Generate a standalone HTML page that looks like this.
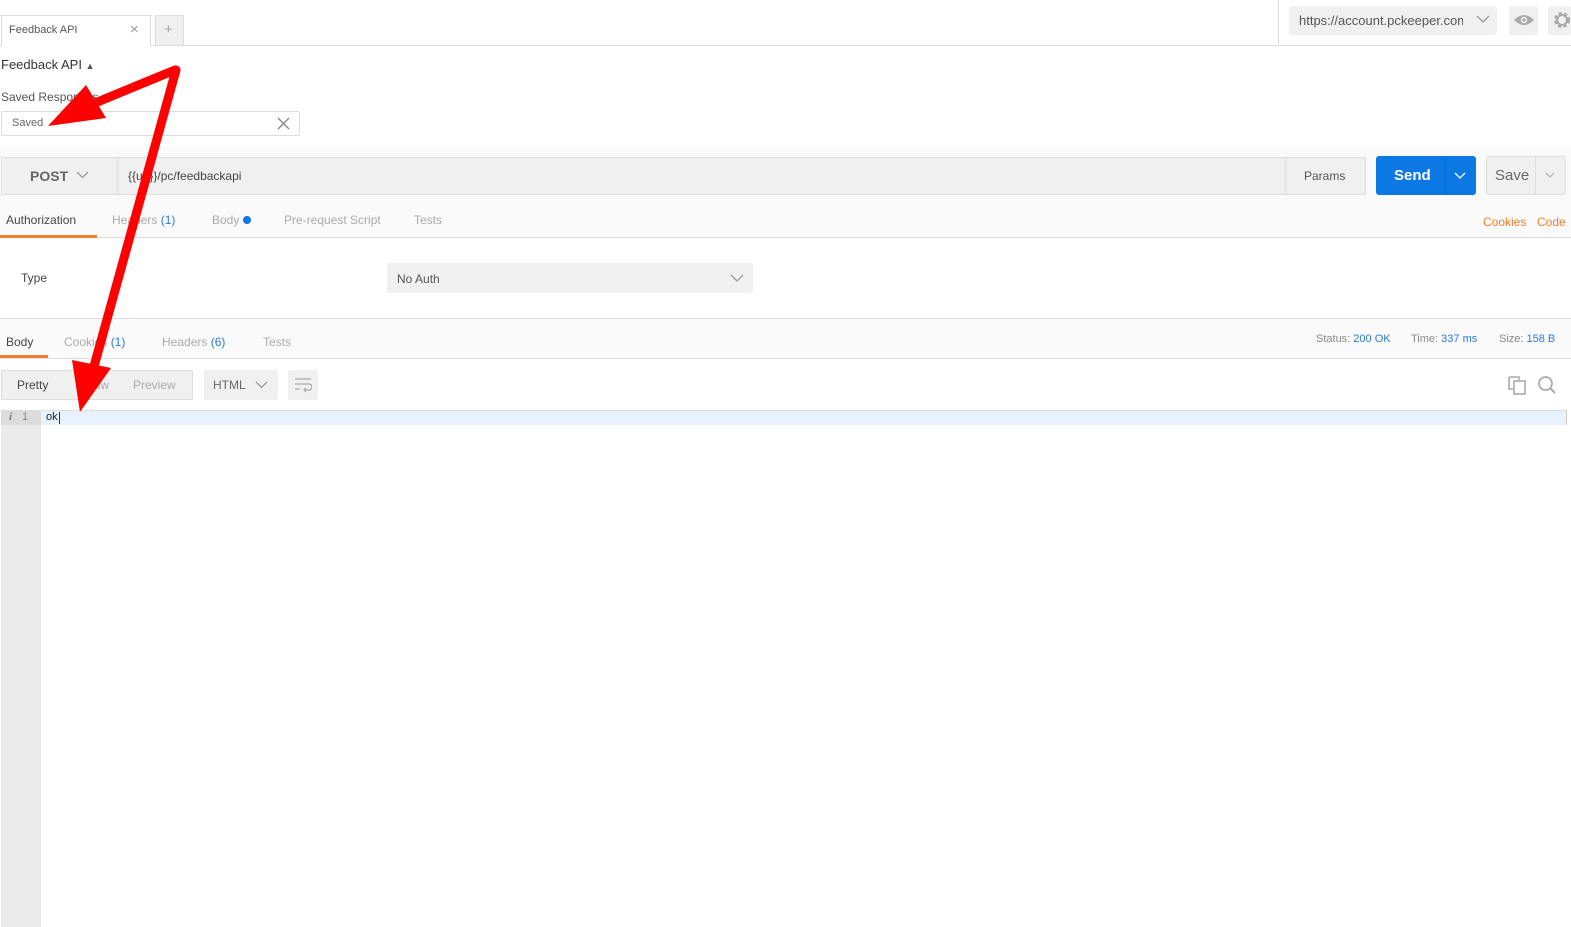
<!DOCTYPE html>
<html><head><meta charset="utf-8"><style>
*{box-sizing:border-box;margin:0;padding:0}
body{width:1571px;height:927px;overflow:hidden;background:#fff;font-family:"Liberation Sans","DejaVu Sans",sans-serif;color:#555;position:relative;font-size:12px}
.a{position:absolute}
.gray{background:#f0f0f0}
.t{position:absolute;white-space:nowrap}
.blue{color:#2b7bd6}
.or{color:#f07e2b}
</style></head><body>
<!-- top bar -->
<div class="a" style="left:0;top:45px;width:1571px;height:1px;background:#ddd"></div>
<div class="a" style="left:1px;top:15px;width:150px;height:31px;background:#fff;border:1px solid #ddd;border-bottom:none"></div>
<div class="t" style="left:9px;top:24px;font-size:11px;color:#555">Feedback API</div>
<div class="t" style="left:130px;top:21px;font-size:15px;color:#999">×</div>
<div class="a gray" style="left:155px;top:15px;width:29px;height:30px;border:1px solid #ddd;border-bottom:none"></div>
<div class="t" style="left:164px;top:21px;font-size:15px;color:#aaa">+</div>
<div class="a" style="left:1278px;top:0;width:1px;height:45px;background:#ddd"></div>
<div class="a gray" style="left:1289px;top:6px;width:208px;height:29px;border-radius:3px"></div>
<div class="t" style="left:1299px;top:13px;font-size:13px;color:#555;width:164px;overflow:hidden">https://account.pckeeper.com</div>
<svg class="a" style="left:1476px;top:14px" width="14" height="10"><path d="M1 2l6 6 6-6" fill="none" stroke="#999" stroke-width="1.3"/></svg>
<div class="a gray" style="left:1509px;top:6px;width:29px;height:29px;border-radius:3px"></div>
<svg class="a" style="left:1513px;top:12px" width="22" height="16"><path d="M1 8Q11-2 21 8Q11 18 1 8Z" fill="#aaa"/><circle cx="11" cy="8" r="3.2" fill="#f0f0f0"/><circle cx="11" cy="8" r="1.6" fill="#aaa"/></svg>
<div class="a gray" style="left:1548px;top:6px;width:23px;height:29px;border-radius:3px"></div>
<svg class="a" style="left:1552px;top:10px" width="19" height="20"><circle cx="10" cy="10" r="6" fill="none" stroke="#aaa" stroke-width="4" stroke-dasharray="3 2"/><circle cx="10" cy="10" r="5" fill="none" stroke="#aaa" stroke-width="2"/></svg>

<div class="t" style="left:1px;top:57px;font-size:13px;color:#333">Feedback API <span style="font-size:9px;color:#555">▲</span></div>
<div class="t" style="left:1px;top:90px;font-size:12px;color:#555">Saved Responses</div>
<div class="a" style="left:1px;top:111px;width:299px;height:25px;border:1px solid #ddd;border-radius:2px"></div>
<div class="t" style="left:12px;top:117px;font-size:11px;color:#666">Saved</div>
<svg class="a" style="left:277px;top:117px" width="13" height="13"><path d="M1 1l11 11M12 1L1 12" stroke="#888" stroke-width="1.4"/></svg>

<!-- request band -->
<div class="a" style="left:0;top:146px;width:1571px;height:92px;background:#fafafa"></div>
<div class="a gray" style="left:1px;top:157px;width:1365px;height:38px;border:1px solid #ddd;border-radius:2px"></div>
<div class="a" style="left:117px;top:158px;width:1px;height:36px;background:#ddd"></div>
<div class="a" style="left:1285px;top:158px;width:1px;height:36px;background:#ddd"></div>
<div class="t" style="left:30px;top:168px;font-size:14px;color:#666;font-weight:bold">POST</div>
<svg class="a" style="left:76px;top:171px" width="13" height="9"><path d="M1 1l5.5 5.5L12 1" fill="none" stroke="#999" stroke-width="1.3"/></svg>
<div class="t" style="left:128px;top:169px;font-size:12px;color:#444">{{url}}/pc/feedbackapi</div>
<div class="t" style="left:1304px;top:169px;font-size:12px;color:#555">Params</div>
<div class="a" style="left:1376px;top:156px;width:100px;height:39px;background:#0b78e3;border-radius:3px"></div>
<div class="a" style="left:1445px;top:156px;width:1px;height:39px;background:#0a66c2"></div>
<div class="t" style="left:1394px;top:167px;font-size:15px;color:#fff;font-weight:bold">Send</div>
<svg class="a" style="left:1454px;top:172px" width="12" height="8"><path d="M1 1l5 5 5-5" fill="none" stroke="#fff" stroke-width="1.3"/></svg>
<div class="a gray" style="left:1486px;top:156px;width:80px;height:39px;border:1px solid #ddd;border-radius:3px"></div>
<div class="a" style="left:1535px;top:157px;width:1px;height:37px;background:#ddd"></div>
<div class="t" style="left:1495px;top:167px;font-size:15px;color:#666">Save</div>
<svg class="a" style="left:1545px;top:172px" width="10" height="7"><path d="M1 1l4 4 4-4" fill="none" stroke="#aaa" stroke-width="1"/></svg>

<div class="t" style="left:6px;top:213px;font-size:12px;color:#444">Authorization</div>
<div class="t" style="left:112px;top:213px;font-size:12px;color:#aaa">Headers <span class="blue">(1)</span></div>
<div class="t" style="left:212px;top:213px;font-size:12px;color:#aaa">Body <span style="display:inline-block;width:8px;height:8px;border-radius:50%;background:#0b78e3"></span></div>
<div class="t" style="left:284px;top:213px;font-size:12px;color:#aaa">Pre-request Script</div>
<div class="t" style="left:414px;top:213px;font-size:12px;color:#aaa">Tests</div>
<div class="t or" style="left:1483px;top:215px;font-size:12px">Cookies</div>
<div class="t or" style="left:1537px;top:215px;font-size:12px">Code</div>
<div class="a" style="left:0;top:237px;width:1571px;height:1px;background:#ddd"></div>
<div class="a" style="left:0;top:235px;width:97px;height:3px;background:#f07e2b"></div>

<div class="t" style="left:21px;top:271px;font-size:12px;color:#444">Type</div>
<div class="a gray" style="left:387px;top:263px;width:366px;height:30px;border-radius:2px"></div>
<div class="t" style="left:397px;top:272px;font-size:12px;color:#555">No Auth</div>
<svg class="a" style="left:730px;top:274px" width="14" height="9"><path d="M1 1l6 6 6-6" fill="none" stroke="#999" stroke-width="1.3"/></svg>

<!-- response -->
<div class="a" style="left:0;top:318px;width:1571px;height:41px;background:#fafafa;border-top:1px solid #ddd;border-bottom:1px solid #ddd"></div>
<div class="a" style="left:0;top:355px;width:48px;height:3px;background:#f07e2b"></div>
<div class="t" style="left:6px;top:335px;font-size:12px;color:#444">Body</div>
<div class="t" style="left:64px;top:335px;font-size:12px;color:#aaa">Cookies <span class="blue">(1)</span></div>
<div class="t" style="left:162px;top:335px;font-size:12px;color:#aaa">Headers <span class="blue">(6)</span></div>
<div class="t" style="left:263px;top:335px;font-size:12px;color:#aaa">Tests</div>
<div class="t" style="left:1316px;top:333px;font-size:11px;color:#888">Status: <span class="blue">200 OK</span></div>
<div class="t" style="left:1411px;top:333px;font-size:11px;color:#888">Time: <span class="blue">337 ms</span></div>
<div class="t" style="left:1499px;top:333px;font-size:11px;color:#888">Size: <span class="blue">158 B</span></div>

<div class="a gray" style="left:1px;top:370px;width:192px;height:30px;border:1px solid #ddd;border-radius:2px"></div>
<div class="t" style="left:17px;top:378px;font-size:12px;color:#444">Pretty</div>
<div class="t" style="left:85px;top:378px;font-size:12px;color:#aaa">Raw</div>
<div class="t" style="left:133px;top:378px;font-size:12px;color:#aaa">Preview</div>
<div class="a gray" style="left:204px;top:370px;width:74px;height:30px;border-radius:2px"></div>
<div class="t" style="left:213px;top:378px;font-size:12px;color:#666">HTML</div>
<svg class="a" style="left:255px;top:381px" width="13" height="9"><path d="M1 1l5.5 5.5L12 1" fill="none" stroke="#999" stroke-width="1.3"/></svg>
<div class="a gray" style="left:288px;top:370px;width:30px;height:30px;border-radius:2px"></div>
<svg class="a" style="left:294px;top:377px" width="18" height="16"><path d="M1 2h16M1 7h14a3 3 0 0 1 0 6h-4M1 12h5" fill="none" stroke="#aaa" stroke-width="1.3"/><path d="M12 11l-2 2 2 2" fill="none" stroke="#aaa" stroke-width="1.2"/></svg>
<svg class="a" style="left:1508px;top:375px" width="20" height="20"><path d="M1 2h10v3M1 2v12h4" fill="none" stroke="#aaa" stroke-width="1.6"/><rect x="6" y="6" width="11" height="13" fill="none" stroke="#aaa" stroke-width="1.6"/></svg>
<svg class="a" style="left:1537px;top:375px" width="20" height="20"><circle cx="8.5" cy="8.5" r="6.5" fill="none" stroke="#aaa" stroke-width="1.7"/><path d="M13 13l5 5" stroke="#aaa" stroke-width="2"/></svg>

<!-- editor -->
<div class="a" style="left:0;top:410px;width:1567px;height:1px;background:#ddd"></div>
<div class="a" style="left:1px;top:411px;width:40px;height:516px;background:#ebebeb"></div>
<div class="a" style="left:1px;top:411px;width:40px;height:14px;background:#dcdcdc"></div>
<div class="a" style="left:41px;top:411px;width:1526px;height:14px;background:#e8f2ff"></div>
<div class="a" style="left:1566px;top:411px;width:1px;height:14px;background:#ccc"></div>
<div class="t" style="left:9px;top:411px;font-size:11px;color:#777;font-style:italic;font-family:'Liberation Serif',serif;font-weight:bold">i</div>
<div class="t" style="left:22px;top:411px;font-size:11px;color:#888">1</div>
<div class="t" style="left:46px;top:411px;font-size:11px;color:#222">ok</div>
<div class="a" style="left:59px;top:412px;width:1px;height:12px;background:#333"></div>

<!-- red arrows -->
<svg class="a" style="left:0;top:0" width="1571" height="927">
<path d="M175 70L95 103" stroke="#f00" stroke-width="9" stroke-linecap="round" fill="none"/>
<path d="M48 126L86 85L106 118Z" fill="#f00"/>
<path d="M176 70L93 370" stroke="#f00" stroke-width="9" stroke-linecap="round" fill="none"/>
<path d="M80 412L72 360L111 368Z" fill="#f00"/>
</svg>
</body></html>
